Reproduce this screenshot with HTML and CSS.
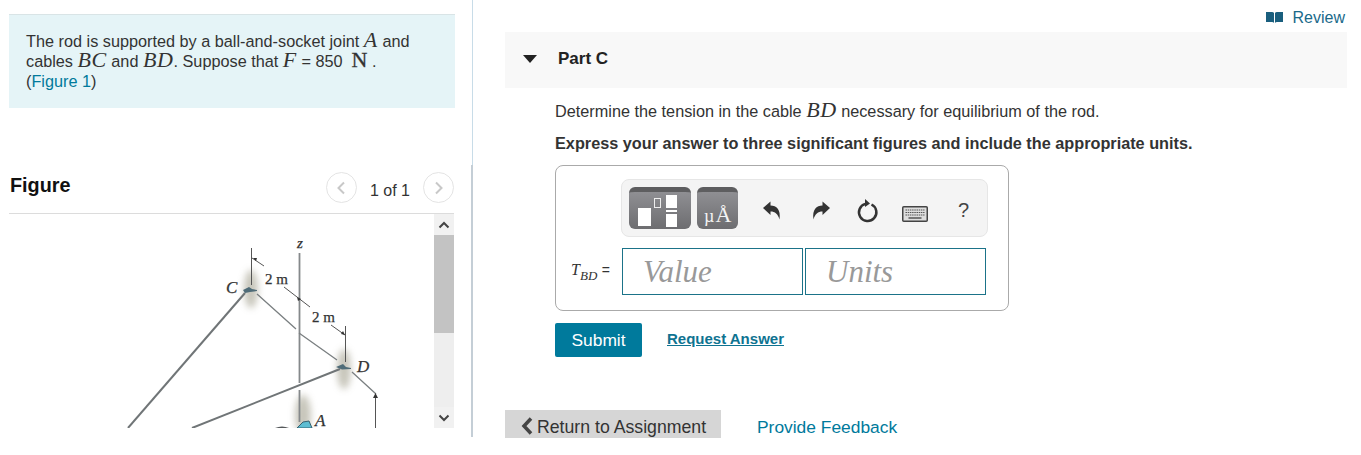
FILE: index.html
```html
<!DOCTYPE html>
<html lang="en">
<head>
<meta charset="utf-8">
<title>Part C</title>
<link rel="stylesheet" href="styles.css">
</head>
<body>
<div class="page">
  <aside class="left">
    <section class="intro-wrap">
      <div class="intro">
        The rod is supported by a ball-and-socket joint <span class="m">A</span> and<br>
        cables <span class="m">BC</span> and <span class="m">BD</span>. Suppose that <span class="m">F</span> = 850 &nbsp;<span class="mr">N</span> .<br>
        (<a class="link">Figure 1</a>)
      </div>
    </section>
    <section class="figure-wrap">
      <div class="figure-head">
        <h2 class="figure-title">Figure</h2>
        <div class="pager">
          <span class="circle"><svg width="10" height="14" viewBox="0 0 10 14"><path d="M8 1.500 2.500 7 8 12.500" class="chev"/></svg></span>
          <span class="count">1 of 1</span>
          <span class="circle"><svg width="10" height="14" viewBox="0 0 10 14"><path d="M2 1.500 7.500 7 2 12.500" class="chev"/></svg></span>
        </div>
      </div>
      <div class="figure-body">
        <svg class="diagram" width="424" height="214" viewBox="10 214 424 214">
          <defs>
            <filter id="b" x="-100%" y="-100%" width="300%" height="300%"><feGaussianBlur stdDeviation="3.500"/></filter>
            <clipPath id="pane"><rect x="10" y="214" width="424" height="214"/></clipPath>
          </defs>
          <g clip-path="url(#pane)">
            <ellipse cx="251" cy="289" rx="7" ry="19" class="blob" filter="url(#b)"/>
            <ellipse cx="344" cy="369" rx="7" ry="20" class="blob" filter="url(#b)"/>
            <ellipse cx="303" cy="415" rx="8" ry="20" class="blob" filter="url(#b)"/>
            <path d="M299.500 253V383M299.500 390V422" class="axis"/>
            <path d="M251.500 248V285M345.500 326V362M375.500 396V428" class="thin"/>
            <path d="M252 258 264 266M284 287 310 307M331 325 345 335" class="thin"/>
            <path d="M257 294 296 329M299 333 337 360M352 372 376 394" class="rod"/>
            <path d="M245 293 128 428" class="cable"/>
            <path d="M340 369 192 428" class="cable"/>
            <path d="M253 258l4 0-1 3zM345 335l-4-1 2-3zM297 297l4 2-3 2zM375.500 393l-2.500 5h5z" class="arrow"/>
            <path d="M243 290l6-3 3 2 5 1v1l-7 1-5 1zM336 367l7-3 3 3 5 1v1l-9 .5z" class="joint"/>
            <path d="M275 428q7-3 14 0z" class="dark"/>
            <path d="M297 428l6-6 6-1 3 7z" class="ball"/>
          </g>
          <text x="300" y="248" class="lab i" text-anchor="middle">z</text>
          <text x="265" y="284" class="lab">2 m</text>
          <text x="312" y="322" class="lab">2 m</text>
          <text x="226" y="293" class="lab i big">C</text>
          <text x="357" y="372" class="lab i big">D</text>
          <text x="315" y="426" class="lab i big">A</text>
        </svg>
        <div class="scrollbar">
          <span class="sb-btn"><svg width="12" height="8" viewBox="0 0 12 8"><path d="M1.500 6.500 6 2l4.500 4.500" class="sb-chev"/></svg></span>
          <span class="sb-track"><span class="sb-thumb"></span></span>
          <span class="sb-btn"><svg width="12" height="8" viewBox="0 0 12 8"><path d="M1.500 1.500 6 6l4.500-4.500" class="sb-chev"/></svg></span>
        </div>
      </div>
    </section>
  </aside>
  <main class="right">
    <div class="review">
      <svg width="17" height="11" viewBox="0 0 17 11"><path d="M0 0h6q1.500 0 2 1v10q-.5-1-2-1H0zM17 0h-6q-1.500 0-2 1v10q.5-1 2-1h6z" fill="#1a5f7e"/></svg>
      <a class="review-link">Review</a>
    </div>
    <div class="part-bar">
      <span class="caret"></span>
      <h3 class="part-title">Part C</h3>
    </div>
    <div class="part-body">
      <p class="prompt">Determine the tension in the cable <span class="m">BD</span> necessary for equilibrium of the rod.</p>
      <p class="instr">Express your answer to three significant figures and include the appropriate units.</p>
      <div class="answer">
        <div class="toolbar">
          <span class="tool tool-a">
            <span class="sq-big"></span><span class="sq-small"></span>
            <span class="frac"><span class="fr"></span><span class="fl"></span><span class="fr"></span></span>
          </span>
          <span class="tool tool-b"><span class="mu">µ</span>Å</span>
          <span class="icons">
            <svg width="20" height="20" viewBox="0 0 20 20"><path d="M1 8 8.500 1.500V5.500C14.500 5.500 19 9.500 17.500 19.500 16 14 13 11.500 8.500 11.500V15z" class="ic"/></svg>
            <svg width="20" height="20" viewBox="0 0 20 20"><path d="M19 8 11.500 1.500V5.500C5.500 5.500 1 9.500 2.500 19.500 4 14 7 11.500 11.500 11.500V15z" class="ic"/></svg>
            <svg width="24" height="26" viewBox="0 0 24 26"><path d="M16.500 7.500a8.700 8.700 0 1 1-6-.6" class="ic-ring"/><path d="M10 2l5 4.500-5 3.500z" class="ic"/></svg>
            <svg class="kbd" width="26" height="16" viewBox="0 0 26 16"><rect x=".75" y=".75" width="24.500" height="14.500" rx="1" class="kb-o"/><path d="M3.500 4h19M3.500 6.500h19M3.500 9h19" class="kb-k"/><path d="M6.500 12h13" class="kb-s"/></svg>
            <span class="help">?</span>
          </span>
        </div>
        <div class="answer-row">
          <span class="lhs"><i class="t">T</i><i class="sub">BD</i> <span class="eq">=</span></span>
          <span class="field"><span class="ph">Value</span></span>
          <span class="field"><span class="ph">Units</span></span>
        </div>
      </div>
      <div class="actions">
        <button class="submit">Submit</button>
        <a class="request">Request Answer</a>
      </div>
    </div>
    <div class="footer">
      <a class="return"><svg width="12" height="18" viewBox="0 0 12 18"><path d="M10 1.500 3 9l7 7.500" class="ret-chev"/></svg>Return to Assignment</a>
      <a class="feedback">Provide Feedback</a>
    </div>
  </main>
</div>
</body>
</html>
```
FILE: styles.css
```css
* { box-sizing: border-box; }
html, body { margin: 0; padding: 0; height: 455px; overflow: hidden; background: #fff; }
body { font-family: "Liberation Sans", Arial, sans-serif; font-size: 16.25px; color: #333; }
.page { display: flex; align-items: flex-start; }

.left { width: 473px; flex: none; }
.intro-wrap { height: 165px; padding: 14px 17px 0 9px; border-right: 1px solid #c8dce8; }
.intro { height: 94px; padding: 16px 16px 0 17px; background: #e5f4f7; border-top: 1px solid #d9e4e6; line-height: 20px; color: #333; white-space: nowrap; }
.m { display: inline-block; font-family: "Liberation Serif", serif; font-style: italic; font-size: 22px; line-height: 16px; letter-spacing: .6px; }
.mr { display: inline-block; font-family: "Liberation Serif", serif; font-size: 22px; line-height: 16px; -webkit-text-stroke: .3px #333; }
.link { color: #007a9c; }

.figure-wrap { height: 272px; padding-left: 9px; border-right: 2px solid #c4ced6; }
.figure-head { width: 445px; height: 49px; border-bottom: 1px solid #dcdcdc; display: flex; justify-content: space-between; }
.figure-title { margin: 9px 0 0 1px; font-size: 19.8px; line-height: 23px; font-weight: 700; color: #111; }
.pager { display: flex; align-items: flex-start; padding-top: 7px; }
.count { margin: 9px 13px 0 13px; font-size: 16px; line-height: 20px; color: #333; }
.circle { width: 31px; height: 31px; border: 1px solid #e4e4e4; border-radius: 50%; display: flex; align-items: center; justify-content: center; }
.chev { fill: none; stroke: #c8c8c8; stroke-width: 2; }

.figure-body { width: 445px; height: 214px; display: flex; padding-left: 1px; }
.diagram { display: block; flex: none; overflow: visible; }
.blob { fill: #b5b3a4; opacity: .75; }
.axis { fill: none; stroke: #85898b; stroke-width: 1.8; }
.thin { fill: none; stroke: #555; stroke-width: 1; }
.rod { fill: none; stroke: #7a7f81; stroke-width: 1.300; }
.cable { fill: none; stroke: #707577; stroke-width: 2; }
.arrow { fill: #333; }
.joint { fill: #4f6c78; }
.dark { fill: #55595b; }
.ball { fill: #5cbdd2; stroke: #35606f; stroke-width: 1; }
.lab { font-family: "Liberation Serif", serif; font-size: 15px; fill: #333; stroke: #333; stroke-width: .25; }
.i { font-style: italic; }
.big { font-size: 17px; }

.scrollbar { width: 20px; background: #eee; display: flex; flex-direction: column; }
.sb-btn { height: 21px; display: flex; align-items: center; justify-content: center; background: #f1f1f1; flex: none; }
.sb-track { flex: 1; }
.sb-thumb { display: block; height: 98px; background: #c3c3c3; }
.sb-chev { fill: none; stroke: #444; stroke-width: 2; }

.right { flex: 1; padding: 0 14px 0 32px; }
.review { height: 32px; padding: 9px 2px 0 0; display: flex; justify-content: flex-end; align-items: flex-start; gap: 10px; font-size: 16px; }
.review svg { margin-top: 3px; }
.review-link { line-height: 18px; color: #1a6a8a; }
.part-bar { height: 56px; background: #f8f8f8; display: flex; align-items: center; padding: 0 0 3px 18px; }
.caret { width: 0; height: 0; border-left: 7.500px solid transparent; border-right: 7.500px solid transparent; border-top: 8px solid #222; }
.part-title { margin: 0 0 0 21px; font-size: 17px; font-weight: 700; color: #222; }

.part-body { padding-left: 50px; }
.prompt { margin: 13px 0 0; line-height: 20px; height: 20px; color: #333; }
.instr { margin: 12px 0 0; line-height: 20px; height: 20px; font-weight: 700; color: #333; }
.answer { margin-top: 12px; width: 454px; height: 146px; border: 1px solid #aaa; border-radius: 8px; padding: 13px 0 0 65px; }
.toolbar { width: 367px; height: 58px; background: #f4f4f4; border: 1px solid #e6e6e6; border-radius: 8px; display: flex; padding: 7px 0 0 7px; }
.tool { display: block; height: 42px; border-radius: 6px; background: linear-gradient(#8f8f93, #6d6d70); border-top: 5px solid #5e5e60; }
.tool-a { width: 62px; display: flex; padding: 0 0 0 9px; }
.sq-big { width: 13px; height: 18px; margin-top: 16px; background: #fff; }
.sq-small { width: 7px; height: 10px; margin: 6px 0 0 3px; border: 1px solid #eee; }
.frac { width: 11px; margin: 3px 0 0 5px; display: flex; flex-direction: column; }
.fr { height: 13px; background: #fff; }
.fl { height: 2px; margin: 2px 0; background: #fff; }
.tool-b { width: 41px; margin-left: 6px; padding-left: 7px; color: #f4f4f4; font-family: "Liberation Serif", serif; font-size: 22px; text-align: left; line-height: 46px; white-space: nowrap; }
.mu { font-size: 18px; margin-right: 1px; }
.icons { display: flex; align-items: center; height: 42px; margin-left: 24px; padding-top: 4px; }
.icons svg:nth-child(2) { margin-left: 29px; }
.icons svg:nth-child(3) { margin-left: 24px; }
.kbd { margin: 7px 0 0 23px; }
.ic { fill: #333; }
.ic-ring { fill: none; stroke: #333; stroke-width: 2.500; }
.kb-o { fill: #ddd; stroke: #444; stroke-width: 1.500; }
.kb-k { fill: none; stroke: #555; stroke-width: 1.200; stroke-dasharray: 1.500 .7; }
.kb-s { fill: none; stroke: #555; stroke-width: 1.500; }
.help { margin-left: 30px; font-size: 20px; color: #444; }
.answer-row { display: flex; height: 47px; margin: 11px 0 0 -50px; align-items: flex-start; }
.lhs { width: 51px; padding: 13px 0 0 0; font-family: "Liberation Serif", serif; font-size: 16px; color: #333; white-space: nowrap; }
.t { font-size: 16px; }
.sub { font-size: 13px; position: relative; top: 5px; letter-spacing: .2px; }
.eq { font-size: 14px; font-family: "Liberation Sans", sans-serif; margin-left: 0; }
.field { width: 181px; height: 47px; margin-right: 2px; border: 1px solid #1b7389; background: #fff; padding: 1px 0 0 20px; }
.ph { font-family: "Liberation Serif", serif; font-style: italic; font-size: 31px; line-height: 44px; color: #999; }

.actions { margin-top: 12px; display: flex; align-items: flex-start; }
.submit { width: 87px; height: 34px; border: 0; border-radius: 2px; background: #007a9c; color: #fff; font: 17.4px "Liberation Sans", sans-serif; padding: 0; }
.request { margin: 7px 0 0 25px; font-size: 15px; line-height: 18px; font-weight: 700; color: #0e7391; text-decoration: underline; }

.footer { margin-top: 53px; height: 28px; display: flex; align-items: flex-start; }
.return { width: 216px; height: 28px; background: #d6d6d6; color: #333; font-size: 17.7px; line-height: 34px; padding-left: 16px; display: flex; align-items: flex-start; overflow: hidden; }
.return svg { margin: 7px 4px 0 0; flex: none; }
.ret-chev { fill: none; stroke: #444; stroke-width: 3.500; }
.feedback { margin-left: 36px; font-size: 17.4px; line-height: 34px; color: #007a9c; }
```
